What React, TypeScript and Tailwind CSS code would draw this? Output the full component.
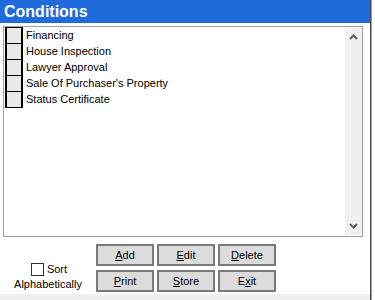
import React from "react";

const items = [
  "Financing",
  "House Inspection",
  "Lawyer Approval",
  "Sale Of Purchaser's Property",
  "Status Certificate",
];

function Btn({ pre, ul, post }: { pre?: string; ul: string; post?: string }) {
  return (
    <div className="w-[58px] h-[22px] border-2 border-[#7a7a7a] bg-[#dcdcdc] flex items-center justify-center text-[11px] text-black leading-none">
      <span>
        {pre}
        <span className="underline underline-offset-1">{ul}</span>
        {post}
      </span>
    </div>
  );
}

export default function App() {
  return (
    <div
      className="w-[375px] h-[300px] bg-white flex overflow-hidden text-black"
      style={{ fontFamily: '"Liberation Sans", Arial, sans-serif' }}
    >
      <div className="w-[370px] flex flex-col">
        <div className="h-[23px] bg-[#1f6bdb] text-white font-bold text-[16px] leading-[23px] pl-[4px]">
          Conditions
        </div>
        <div className="pt-[3px] pl-[3px]">
          <div className="w-[360px] h-[211px] border border-[#a0a0a0] flex">
            <div className="flex-1 flex flex-col pl-px">
              {items.map((t, i) => (
                <div key={t} className={`flex items-center h-[17px] ${i > 0 ? "-mt-px" : ""}`}>
                  <div className="w-[18px] h-[17px] border border-black border-x-2 bg-[#e9e9e9]" />
                  <span className="ml-[3px] text-[11px] leading-none">{t}</span>
                </div>
              ))}
            </div>
            <div className="w-[17px] mt-px mb-px bg-[#f0f0f0] flex flex-col items-center justify-between py-[6px]">
              <svg width="9" height="6" viewBox="0 0 9 6">
                <path d="M1 5 L4.5 1.5 L8 5" stroke="#606060" strokeWidth="2" fill="none" />
              </svg>
              <svg width="9" height="6" viewBox="0 0 9 6">
                <path d="M1 1 L4.5 4.5 L8 1" stroke="#606060" strokeWidth="2" fill="none" />
              </svg>
            </div>
          </div>
        </div>
        <div className="flex pt-[7px] h-[57px]">
          <div className="w-[96px] flex flex-col items-center pt-[19px]">
            <div className="flex items-center gap-[3px] pl-[2px]">
              <div className="w-[13px] h-[13px] border border-[#333] bg-white" />
              <span className="text-[11px] leading-none">Sort</span>
            </div>
            <div className="text-[11px] leading-[13px] mt-[2px]">Alphabetically</div>
          </div>
          <div className="grid grid-cols-[58px_58px_58px] gap-x-[3px] gap-y-[4px] content-start">
            <Btn ul="A" post="dd" />
            <Btn ul="E" post="dit" />
            <Btn ul="D" post="elete" />
            <Btn ul="P" post="rint" />
            <Btn ul="S" post="tore" />
            <Btn pre="E" ul="x" post="it" />
          </div>
        </div>
        <div className="flex-1 bg-[#f0f0f0]" />
      </div>
      <div className="w-px h-full bg-[#4a4a4a]" />
      <div className="w-px h-full bg-[#5db0ee]" />
      <div className="flex-1 bg-white" />
    </div>
  );
}
